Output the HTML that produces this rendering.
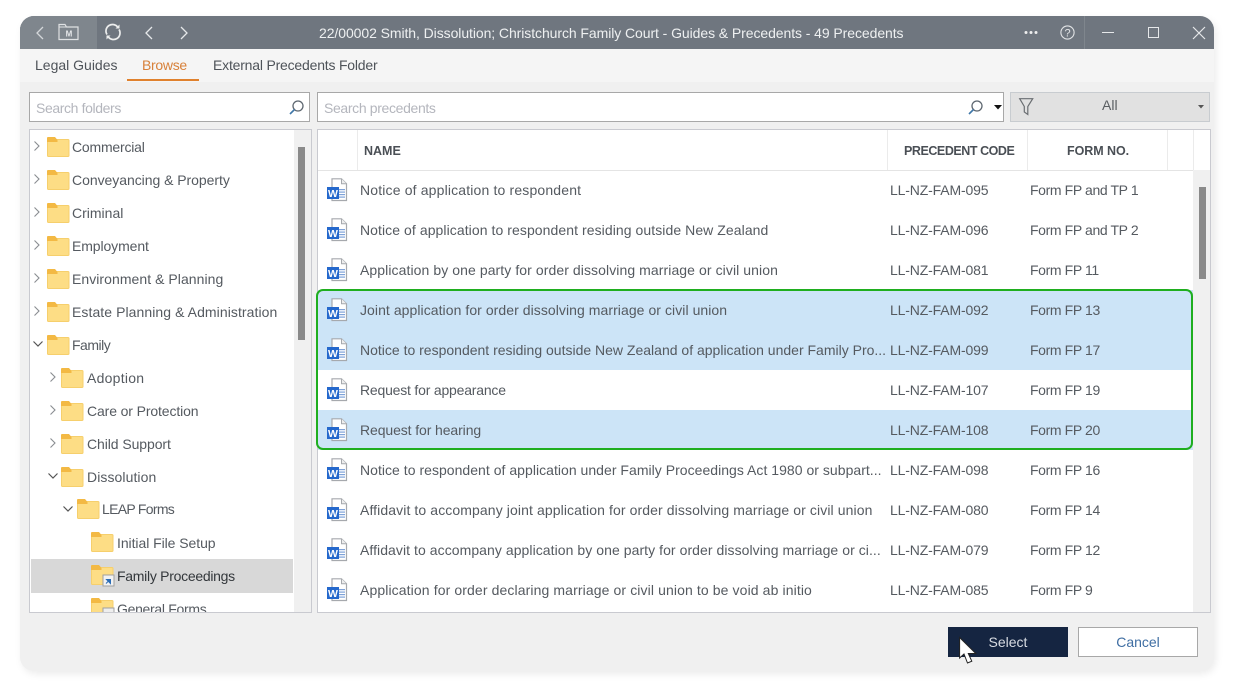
<!DOCTYPE html>
<html><head><meta charset="utf-8">
<style>
html,body{margin:0;padding:0;background:#fff;width:1235px;height:700px;overflow:hidden}
*{box-sizing:border-box}
body{font-family:"Liberation Sans",sans-serif;font-size:14px;color:#555a60;position:relative}
.a{position:absolute}
.t{position:absolute;white-space:nowrap;line-height:18px;height:18px}
#win{position:absolute;left:20px;top:16px;width:1194px;height:655px;background:#f0f0f0;border-radius:14px;box-shadow:2px 3px 8px rgba(0,0,0,.08)}
svg{position:absolute;overflow:visible}
.n{left:360px}
.c{left:890px;letter-spacing:-.15px}
.f{left:1030px;letter-spacing:-.38px}
.w{left:327px}
.h{font-weight:700;font-size:12.5px;color:#4a4f55;top:142px}
</style></head><body>
<svg width="0" height="0" style="position:absolute">
<defs>
<symbol id="fo" viewBox="0 0 23 20" overflow="visible">
<rect x=".5" y="2.500" width="21.500" height="17" rx="1" fill="#fddd85" stroke="#f6cf6c"/>
<path d="M0 5V1a1 1 0 0 1 1-1h7l2.500 3v2z" fill="#f3b944"/>
</symbol>
<symbol id="wd" viewBox="0 0 21 24" overflow="visible">
<path d="M5 .8h9.500l5 5v16.700H5z" fill="#fff" stroke="#a6a9ad" stroke-width="1.200"/>
<path d="M14.500 .8v5h5" fill="#eee" stroke="#a6a9ad"/>
<rect x="11" y="11" width="7" height="1.200" fill="#7ea2d8"/><rect x="11" y="13.500" width="7" height="1.200" fill="#7ea2d8"/><rect x="11" y="16" width="7" height="1.200" fill="#7ea2d8"/><rect x="11" y="18.500" width="7" height="1.200" fill="#7ea2d8"/>
<rect x="0" y="9" width="12" height="12" fill="#2468cc"/>
<text x="6" y="19" font-family="Liberation Sans" font-size="10.500" font-weight="700" text-anchor="middle" fill="#fff">W</text>
</symbol>
<symbol id="sr" viewBox="0 0 15 15" overflow="visible">
<circle cx="9" cy="6" r="5" fill="none" stroke="#5e6770" stroke-width="1.300"/>
<path d="M5.500 9.500 1 14" stroke="#3f77a8" stroke-width="1.600" fill="none"/>
</symbol>
<symbol id="cr" viewBox="0 0 6 10" overflow="visible"><path d="M.5.500 5 5 .5 9.500" fill="none" stroke="#8a8d92" stroke-width="1.100"/></symbol>
<symbol id="dn" viewBox="0 0 10 6" overflow="visible"><path d="M.5.500 5 5 9.500.5" fill="none" stroke="#555" stroke-width="1.200"/></symbol>
</defs>
</svg>

<div id="win"></div>
<!-- title bar -->
<div class="a" style="left:20px;top:16px;width:1194px;height:33px;background:#6f767f;border-radius:14px 14px 0 0"></div>
<div class="a" style="left:20px;top:16px;width:77px;height:33px;background:#7f868d;border-radius:14px 0 0 0"></div>
<div class="a" style="left:1084px;top:16px;width:1px;height:33px;background:#7f868d"></div>
<svg style="left:36px;top:26px" width="8" height="14"><path d="M7 1 1 7l6 6" fill="none" stroke="#d4d7da" stroke-width="1.300"/></svg>
<svg style="left:58px;top:23px" width="22" height="18"><path d="M1 16.500V1.500h6l1.500 2.500h11.500v12.500z" fill="none" stroke="#dfe1e3" stroke-width="1.200"/><path d="M1 4h7" stroke="#dfe1e3" stroke-width="1"/><text x="11" y="13.500" font-size="8" font-weight="700" text-anchor="middle" fill="#e6e8ea" font-family="Liberation Sans">M</text></svg>
<svg style="left:105px;top:24px" width="16" height="16"><path d="M2 10.500A6.500 6.500 0 0 1 13 3.500M14 5.500A6.500 6.500 0 0 1 3 12.500" fill="none" stroke="#eceded" stroke-width="1.700"/><path d="M10.500 4.500h4v-4zM5.500 11.500h-4v4z" fill="#eceded"/></svg>
<svg style="left:145px;top:26px" width="8" height="14"><path d="M7 1 1 7l6 6" fill="none" stroke="#e6e8ea" stroke-width="1.300"/></svg>
<svg style="left:180px;top:26px" width="8" height="14"><path d="M1 1l6 6-6 6" fill="none" stroke="#e6e8ea" stroke-width="1.300"/></svg>
<div class="t" style="left:319px;top:24px;color:#eef0f1;letter-spacing:-.075px">22/00002 Smith, Dissolution; Christchurch Family Court - Guides &amp; Precedents - 49 Precedents</div>
<svg style="left:1024px;top:30px" width="16" height="6"><circle cx="2" cy="2.500" r="1.500" fill="#eee"/><circle cx="7" cy="2.500" r="1.500" fill="#eee"/><circle cx="12" cy="2.500" r="1.500" fill="#eee"/></svg>
<svg style="left:1060px;top:25px" width="15" height="15"><circle cx="7.500" cy="7.500" r="6.600" fill="none" stroke="#e2e4e6" stroke-width="1.100"/><text x="7.500" y="11.500" font-size="11" text-anchor="middle" fill="#e2e4e6" font-family="Liberation Sans">?</text></svg>
<div class="a" style="left:1102px;top:32px;width:12px;height:1px;background:#e6e8ea"></div>
<div class="a" style="left:1148px;top:27px;width:11px;height:11px;border:1px solid #e6e8ea"></div>
<svg style="left:1192px;top:26px" width="14" height="14"><path d="M1 1l12 12M13 1 1 13" stroke="#e6e8ea" stroke-width="1.200"/></svg>

<!-- tabs -->
<div class="a" style="left:20px;top:49px;width:1194px;height:33px;background:#f5f5f5"></div>
<div class="t" style="left:35px;top:56px;color:#4e5359">Legal Guides</div>
<div class="t" style="left:142px;top:56px;color:#d8813a;letter-spacing:-.3px">Browse</div>
<div class="a" style="left:127px;top:79px;width:72px;height:2px;background:#e0812d"></div>
<div class="t" style="left:213px;top:56px;color:#4e5359;letter-spacing:-.2px">External Precedents Folder</div>

<!-- searches -->
<div class="a" style="left:29px;top:92px;width:281px;height:30px;background:#fff;border:1.500px solid #a8a8a8"></div>
<div class="t" style="left:36px;top:99px;color:#b4b6bd;letter-spacing:-.38px">Search folders</div>
<svg style="left:289px;top:100px" width="15" height="15"><use href="#sr" width="15" height="15"/></svg>
<div class="a" style="left:317px;top:92px;width:687px;height:30px;background:#fff;border:1.500px solid #a8a8a8"></div>
<div class="t" style="left:324px;top:99px;color:#b4b6bd;letter-spacing:-.35px">Search precedents</div>
<svg style="left:968px;top:100px" width="15" height="15"><use href="#sr" width="15" height="15"/></svg>
<svg style="left:994px;top:105px" width="9" height="5"><path d="M0 0h8L4 4.500z" fill="#111"/></svg>
<div class="a" style="left:1010px;top:92px;width:200px;height:30px;background:#e1e1e1;border:1px solid #c8ccd0"></div>
<svg style="left:1019px;top:98px" width="15" height="18"><path d="M.7.700h13L8.800 8.500v8l-3.500-2.500V8.500z" fill="none" stroke="#6a6e72" stroke-width="1.200"/></svg>
<div class="t" style="left:1102px;top:96px;color:#5a5e62">All</div>
<svg style="left:1198px;top:105px" width="7" height="4"><path d="M0 0h6L3 3.500z" fill="#555"/></svg>

<!-- tree panel -->
<div class="a" style="left:29px;top:129px;width:283px;height:484px;background:#f0f0f0;border:1px solid #c9cad0;overflow:hidden">
 <div class="a" style="left:0;top:0;width:264px;height:482px;background:#fff"></div>
 <div class="a" style="left:1px;top:429px;width:262px;height:34px;background:#d8d8d8"></div>
 <div class="a" style="left:268px;top:17px;width:7px;height:193px;background:#8a8a8a"></div>
 <svg style="left:61px;top:468px" width="24" height="20"><use href="#fo" width="23" height="20"/><rect x="12" y="10" width="11" height="11" fill="#eee" stroke="#a0a0a0"/></svg>
 <div class="t" style="left:87px;top:470px;letter-spacing:-.3px">General Forms</div>
</div>
<svg style="left:34px;top:141px" width="6" height="10"><use href="#cr" width="6" height="10"/></svg>
<svg style="left:47px;top:137px" width="23" height="20"><use href="#fo" width="23" height="20"/></svg>
<div class="t" style="left:72px;top:138px;letter-spacing:-.2px">Commercial</div>
<svg style="left:34px;top:174px" width="6" height="10"><use href="#cr" width="6" height="10"/></svg>
<svg style="left:47px;top:170px" width="23" height="20"><use href="#fo" width="23" height="20"/></svg>
<div class="t" style="left:72px;top:171px;letter-spacing:-.04px">Conveyancing &amp; Property</div>
<svg style="left:34px;top:207px" width="6" height="10"><use href="#cr" width="6" height="10"/></svg>
<svg style="left:47px;top:203px" width="23" height="20"><use href="#fo" width="23" height="20"/></svg>
<div class="t" style="left:72px;top:204px">Criminal</div>
<svg style="left:34px;top:240px" width="6" height="10"><use href="#cr" width="6" height="10"/></svg>
<svg style="left:47px;top:236px" width="23" height="20"><use href="#fo" width="23" height="20"/></svg>
<div class="t" style="left:72px;top:237px;letter-spacing:-.1px">Employment</div>
<svg style="left:34px;top:273px" width="6" height="10"><use href="#cr" width="6" height="10"/></svg>
<svg style="left:47px;top:269px" width="23" height="20"><use href="#fo" width="23" height="20"/></svg>
<div class="t" style="left:72px;top:270px;letter-spacing:.05px">Environment &amp; Planning</div>
<svg style="left:34px;top:306px" width="6" height="10"><use href="#cr" width="6" height="10"/></svg>
<svg style="left:47px;top:302px" width="23" height="20"><use href="#fo" width="23" height="20"/></svg>
<div class="t" style="left:72px;top:303px;letter-spacing:.07px">Estate Planning &amp; Administration</div>
<svg style="left:33px;top:341px" width="10" height="6"><use href="#dn" width="10" height="6"/></svg>
<svg style="left:47px;top:335px" width="23" height="20"><use href="#fo" width="23" height="20"/></svg>
<div class="t" style="left:72px;top:336px;letter-spacing:-.5px">Family</div>
<svg style="left:50px;top:372px" width="6" height="10"><use href="#cr" width="6" height="10"/></svg>
<svg style="left:61px;top:368px" width="23" height="20"><use href="#fo" width="23" height="20"/></svg>
<div class="t" style="left:87px;top:369px;letter-spacing:.25px">Adoption</div>
<svg style="left:50px;top:405px" width="6" height="10"><use href="#cr" width="6" height="10"/></svg>
<svg style="left:61px;top:401px" width="23" height="20"><use href="#fo" width="23" height="20"/></svg>
<div class="t" style="left:87px;top:402px;letter-spacing:-.12px">Care or Protection</div>
<svg style="left:50px;top:438px" width="6" height="10"><use href="#cr" width="6" height="10"/></svg>
<svg style="left:61px;top:434px" width="23" height="20"><use href="#fo" width="23" height="20"/></svg>
<div class="t" style="left:87px;top:435px;letter-spacing:-.08px">Child Support</div>
<svg style="left:48px;top:473px" width="10" height="6"><use href="#dn" width="10" height="6"/></svg>
<svg style="left:61px;top:467px" width="23" height="20"><use href="#fo" width="23" height="20"/></svg>
<div class="t" style="left:87px;top:468px;letter-spacing:.08px">Dissolution</div>
<svg style="left:63px;top:506px" width="10" height="6"><use href="#dn" width="10" height="6"/></svg>
<svg style="left:77px;top:499px" width="23" height="20"><use href="#fo" width="23" height="20"/></svg>
<div class="t" style="left:102px;top:500px;letter-spacing:-.7px">LEAP Forms</div>
<svg style="left:91px;top:532px" width="23" height="20"><use href="#fo" width="23" height="20"/></svg>
<div class="t" style="left:117px;top:534px;letter-spacing:-.06px">Initial File Setup</div>
<svg style="left:91px;top:565px" width="24" height="22"><use href="#fo" width="23" height="20"/><rect x="12" y="10" width="11" height="11" fill="#f2f2f2" stroke="#a0a0a0"/><path d="M15 18.500l3-3M15.500 14.500h4v4z" stroke="#2b6cb5" fill="#2b6cb5" stroke-width="1"/></svg>
<div class="t" style="left:117px;top:567px;color:#33373b;letter-spacing:-.28px">Family Proceedings</div>

<!-- list panel -->
<div class="a" style="left:317px;top:129px;width:894px;height:484px;background:#fff;border:1px solid #c9cad0;overflow:hidden">
 <div class="a" style="left:875px;top:40px;width:18px;height:442px;background:#f0f0f0"></div>
 <div class="a" style="left:881px;top:57px;width:7px;height:92px;background:#8a8a8a"></div>
 <div class="a" style="left:0;top:40px;width:875px;height:1px;background:#e4e4e4"></div>
 <div class="a" style="left:39px;top:0;width:1px;height:40px;background:#ebebeb"></div>
 <div class="a" style="left:569px;top:0;width:1px;height:40px;background:#ebebeb"></div>
 <div class="a" style="left:709px;top:0;width:1px;height:40px;background:#ebebeb"></div>
 <div class="a" style="left:849px;top:0;width:1px;height:40px;background:#ebebeb"></div>
 <div class="a" style="left:875px;top:0;width:1px;height:40px;background:#ebebeb"></div>
</div>
<div class="t h" style="left:364px">NAME</div>
<div class="t h" style="left:904px;letter-spacing:-.45px">PRECEDENT CODE</div>
<div class="t h" style="left:1067px;letter-spacing:-.05px">FORM NO.</div>

<div class="a" style="left:318px;top:290px;width:875px;height:80px;background:#cce4f7"></div>
<div class="a" style="left:318px;top:410px;width:875px;height:40px;background:#cce4f7"></div>
<div class="a" style="left:316px;top:289px;width:877px;height:161px;border:2px solid #1fae1f;border-radius:7px"></div>

<svg class="w" style="top:178px" width="21" height="24"><use href="#wd" width="21" height="24"/></svg>
<div class="t n" style="top:181px;letter-spacing:.16px">Notice of application to respondent</div><div class="t c" style="top:181px">LL-NZ-FAM-095</div><div class="t f" style="top:181px">Form FP and TP 1</div>
<svg class="w" style="top:218px" width="21" height="24"><use href="#wd" width="21" height="24"/></svg>
<div class="t n" style="top:221px;letter-spacing:.07px">Notice of application to respondent residing outside New Zealand</div><div class="t c" style="top:221px">LL-NZ-FAM-096</div><div class="t f" style="top:221px">Form FP and TP 2</div>
<svg class="w" style="top:258px" width="21" height="24"><use href="#wd" width="21" height="24"/></svg>
<div class="t n" style="top:261px;letter-spacing:.08px">Application by one party for order dissolving marriage or civil union</div><div class="t c" style="top:261px">LL-NZ-FAM-081</div><div class="t f" style="top:261px">Form FP 11</div>
<svg class="w" style="top:298px" width="21" height="24"><use href="#wd" width="21" height="24"/></svg>
<div class="t n" style="top:301px;letter-spacing:.06px">Joint application for order dissolving marriage or civil union</div><div class="t c" style="top:301px">LL-NZ-FAM-092</div><div class="t f" style="top:301px">Form FP 13</div>
<svg class="w" style="top:338px" width="21" height="24"><use href="#wd" width="21" height="24"/></svg>
<div class="t n" style="top:341px">Notice to respondent residing outside New Zealand of application under Family Pro...</div><div class="t c" style="top:341px">LL-NZ-FAM-099</div><div class="t f" style="top:341px">Form FP 17</div>
<svg class="w" style="top:378px" width="21" height="24"><use href="#wd" width="21" height="24"/></svg>
<div class="t n" style="top:381px;letter-spacing:-.2px">Request for appearance</div><div class="t c" style="top:381px">LL-NZ-FAM-107</div><div class="t f" style="top:381px">Form FP 19</div>
<svg class="w" style="top:418px" width="21" height="24"><use href="#wd" width="21" height="24"/></svg>
<div class="t n" style="top:421px;letter-spacing:-.1px">Request for hearing</div><div class="t c" style="top:421px">LL-NZ-FAM-108</div><div class="t f" style="top:421px">Form FP 20</div>
<svg class="w" style="top:458px" width="21" height="24"><use href="#wd" width="21" height="24"/></svg>
<div class="t n" style="top:461px;letter-spacing:.03px">Notice to respondent of application under Family Proceedings Act 1980 or subpart...</div><div class="t c" style="top:461px">LL-NZ-FAM-098</div><div class="t f" style="top:461px">Form FP 16</div>
<svg class="w" style="top:498px" width="21" height="24"><use href="#wd" width="21" height="24"/></svg>
<div class="t n" style="top:501px;letter-spacing:.1px">Affidavit to accompany joint application for order dissolving marriage or civil union</div><div class="t c" style="top:501px">LL-NZ-FAM-080</div><div class="t f" style="top:501px">Form FP 14</div>
<svg class="w" style="top:538px" width="21" height="24"><use href="#wd" width="21" height="24"/></svg>
<div class="t n" style="top:541px;letter-spacing:.06px">Affidavit to accompany application by one party for order dissolving marriage or ci...</div><div class="t c" style="top:541px">LL-NZ-FAM-079</div><div class="t f" style="top:541px">Form FP 12</div>
<svg class="w" style="top:578px" width="21" height="24"><use href="#wd" width="21" height="24"/></svg>
<div class="t n" style="top:581px;letter-spacing:.11px">Application for order declaring marriage or civil union to be void ab initio</div><div class="t c" style="top:581px">LL-NZ-FAM-085</div><div class="t f" style="top:581px">Form FP 9</div>

<!-- buttons -->
<div class="a" style="left:948px;top:627px;width:120px;height:30px;background:#152541"></div>
<div class="t" style="left:948px;width:120px;text-align:center;top:633px;color:#d8dce2">Select</div>
<div class="a" style="left:1078px;top:627px;width:120px;height:30px;background:#fff;border:1.500px solid #a8a8a8"></div>
<div class="t" style="left:1078px;width:120px;text-align:center;top:633px;color:#3f6ea3">Cancel</div>
<svg style="left:959px;top:637px" width="18" height="28"><path d="M.6.500V21l4.400-4 3.500 9 4.300-1.800-3.500-7.700h7.500z" fill="#fff" stroke="#222" stroke-width="1"/></svg>
</body></html>
